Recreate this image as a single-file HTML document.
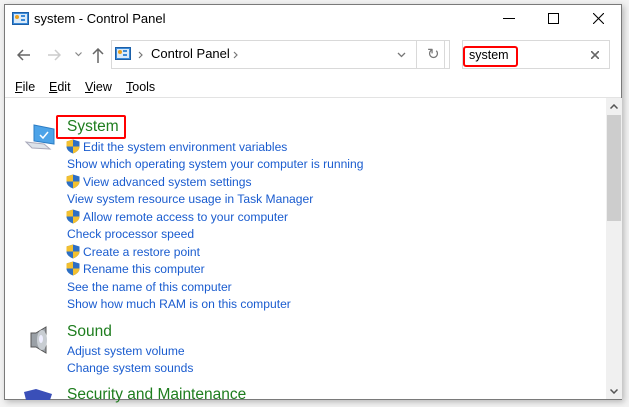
<!DOCTYPE html>
<html><head><meta charset="utf-8"><style>
body{margin:0;width:629px;height:407px;background:#f3f3f3;font-family:"Liberation Sans",sans-serif;position:relative;overflow:hidden}
.win{position:absolute;left:4px;top:4px;width:618px;height:396px;background:#fff;border:1px solid #7a7a7a;box-sizing:border-box;box-shadow:2px 2px 6px rgba(0,0,0,.25);overflow:hidden}
.a{position:absolute;white-space:nowrap}
.l{position:absolute;left:67px;color:#1a5ccf;font-size:12.1px;white-space:nowrap}
.h{position:absolute;left:67px;color:#1e7d1e;font-size:15.5px;white-space:nowrap}
.sh{position:absolute;left:66px;width:14px;height:15px}
</style></head><body>
<div class="win"></div>
<svg class="a" style="left:12px;top:12px" width="17" height="14"><rect x="0.5" y="0.5" width="16" height="12" fill="#3b8ad8" stroke="#1c5fa8"/><rect x="2" y="2" width="13" height="9" fill="#dbeaf8"/><circle cx="5" cy="5" r="2" fill="#e8a020"/><rect x="9" y="3" width="4" height="2" fill="#3b8ad8"/><rect x="9" y="7" width="4" height="2" fill="#3b8ad8"/></svg>
<div class="a" style="left:34px;top:11px;font-size:13px;color:#000">system - Control Panel</div>
<div class="a" style="left:503px;top:18px;width:12px;height:1px;background:#000"></div>
<div class="a" style="left:548px;top:13px;width:9px;height:9px;border:1px solid #000"></div>
<svg class="a" style="left:593px;top:13px" width="11" height="11"><path d="M0 0L11 11M11 0L0 11" stroke="#000" stroke-width="1.1"/></svg>
<svg class="a" style="left:17px;top:49px" width="14" height="12"><path d="M1 6H13M6 1L1 6L6 11" stroke="#666" stroke-width="1.5" fill="none"/></svg>
<svg class="a" style="left:47px;top:49px" width="14" height="12"><path d="M1 6H13M8 1L13 6L8 11" stroke="#ccc" stroke-width="1.5" fill="none"/></svg>
<svg class="a" style="left:75px;top:52px" width="7" height="5"><path d="M0.5 0.5L3.5 3.5L6.5 0.5" stroke="#888" stroke-width="1.2" fill="none"/></svg>
<svg class="a" style="left:92px;top:48px" width="12" height="15"><path d="M6 15V1M1 6L6 1L11 6" stroke="#666" stroke-width="1.5" fill="none"/></svg>
<div class="a" style="left:111px;top:40px;width:334px;height:29px;border:1px solid #d9d9d9;box-sizing:border-box"></div>
<div class="a" style="left:416px;top:40px;width:34px;height:29px;border:1px solid #d9d9d9;box-sizing:border-box"></div>
<svg class="a" style="left:115px;top:47px" width="16" height="13"><rect x="0.5" y="0.5" width="15" height="12" fill="#3b8ad8" stroke="#1c5fa8"/><rect x="2" y="2" width="12" height="9" fill="#dbeaf8"/><circle cx="5" cy="5" r="2" fill="#e8a020"/><rect x="8" y="3" width="4" height="2" fill="#3b8ad8"/><rect x="8" y="7" width="4" height="2" fill="#3b8ad8"/></svg>
<svg class="a" style="left:138px;top:51px" width="5" height="8"><path d="M1 1L4 4L1 7" stroke="#777" stroke-width="1.2" fill="none"/></svg>
<div class="a" style="left:151px;top:46px;font-size:13px;color:#000">Control Panel</div>
<svg class="a" style="left:233px;top:51px" width="5" height="8"><path d="M1 1L4 4L1 7" stroke="#777" stroke-width="1.2" fill="none"/></svg>
<svg class="a" style="left:397px;top:52px" width="9" height="6"><path d="M1 1L4.5 4.5L8 1" stroke="#777" stroke-width="1.3" fill="none"/></svg>
<div class="a" style="left:427px;top:45px;font-size:15px;color:#777">↻</div>
<div class="a" style="left:462px;top:40px;width:148px;height:29px;border:1px solid #d9d9d9;box-sizing:border-box"></div>
<div class="a" style="left:463px;top:46px;width:55px;height:21px;border:2.5px solid #f00;border-radius:3px;box-sizing:border-box"></div>
<div class="a" style="left:469px;top:48px;font-size:12.5px;color:#000">system</div>
<svg class="a" style="left:591px;top:51px" width="8" height="8"><path d="M0 0L8 8M8 0L0 8" stroke="#666" stroke-width="1.6"/></svg>
<div class="a" style="left:15px;top:80px;font-size:12.5px;color:#000"><u>F</u>ile</div>
<div class="a" style="left:49px;top:80px;font-size:12.5px;color:#000"><u>E</u>dit</div>
<div class="a" style="left:85px;top:80px;font-size:12.5px;color:#000"><u>V</u>iew</div>
<div class="a" style="left:126px;top:80px;font-size:12.5px;color:#000"><u>T</u>ools</div>
<div class="a" style="left:5px;top:97px;width:616px;height:1px;background:#e3e3e3"></div>
<div class="a" style="left:606px;top:98px;width:16px;height:301px;background:#f0f0f0"></div>
<div class="a" style="left:607px;top:115px;width:14px;height:106px;background:#cdcdcd"></div>
<svg class="a" style="left:610px;top:104px" width="8" height="5"><path d="M0.5 4.5L4 1L7.5 4.5" stroke="#555" stroke-width="1.5" fill="none"/></svg>
<svg class="a" style="left:610px;top:389px" width="8" height="5"><path d="M0.5 0.5L4 4L7.5 0.5" stroke="#555" stroke-width="1.5" fill="none"/></svg>
<svg class="a" style="left:24px;top:122px" width="34" height="30"><path d="M10 3L30 7V22L10 19Z" fill="#4da3e8" stroke="#2b7cc4"/><path d="M16 13L19 16L24 10" stroke="#fff" stroke-width="1.5" fill="none"/><path d="M2 20L20 22L26 27L8 26Z" fill="#dde3ea" stroke="#aab"/></svg>
<div class="a" style="left:56px;top:115px;width:70px;height:24px;border:2.5px solid #f00;border-radius:2px;box-sizing:border-box"></div>
<div class="h" style="top:118px">System</div>
<div class="l" style="left:83px;top:140px">Edit the system environment variables</div>
<div class="l" style="top:157px">Show which operating system your computer is running</div>
<div class="l" style="left:83px;top:175px">View advanced system settings</div>
<div class="l" style="top:192px">View system resource usage in Task Manager</div>
<div class="l" style="left:83px;top:210px">Allow remote access to your computer</div>
<div class="l" style="top:227px">Check processor speed</div>
<div class="l" style="left:83px;top:245px">Create a restore point</div>
<div class="l" style="left:83px;top:262px">Rename this computer</div>
<div class="l" style="top:280px">See the name of this computer</div>
<div class="l" style="top:297px">Show how much RAM is on this computer</div>
<svg width="0" height="0" style="position:absolute"><defs><g id="s"><path d="M7 0.5L13.5 2.5V7.5C13.5 10.5 11 13 7 14.5C3 13 0.5 10.5 0.5 7.5V2.5Z" fill="#2d6fc4"/><path d="M7 0.5V7.5H0.5V2.5Z" fill="#f3c030"/><path d="M7 7.5H13.5C13.5 10.5 11 13 7 14.5Z" fill="#f3c030"/></g></defs></svg>
<svg class="sh" style="top:139px"><use href="#s"/></svg>
<svg class="sh" style="top:174px"><use href="#s"/></svg>
<svg class="sh" style="top:209px"><use href="#s"/></svg>
<svg class="sh" style="top:244px"><use href="#s"/></svg>
<svg class="sh" style="top:261px"><use href="#s"/></svg>
<svg class="a" style="left:26px;top:325px" width="26" height="30"><path d="M10 8L20 2V28L10 22H5V8Z" fill="#9aa0a6" stroke="#555"/><ellipse cx="16" cy="15" rx="5" ry="10" fill="#c8cdd2"/><ellipse cx="15" cy="14" rx="2" ry="4" fill="#eef"/></svg>
<div class="h" style="top:323px">Sound</div>
<div class="l" style="top:344px">Adjust system volume</div>
<div class="l" style="top:361px">Change system sounds</div>
<svg class="a" style="left:22px;top:388px" width="34" height="12"><path d="M2 4L14 1L30 6L28 12H4Z" fill="#3a4fb8"/></svg>
<div class="h" style="top:386px">Security and Maintenance</div>
</body></html>
